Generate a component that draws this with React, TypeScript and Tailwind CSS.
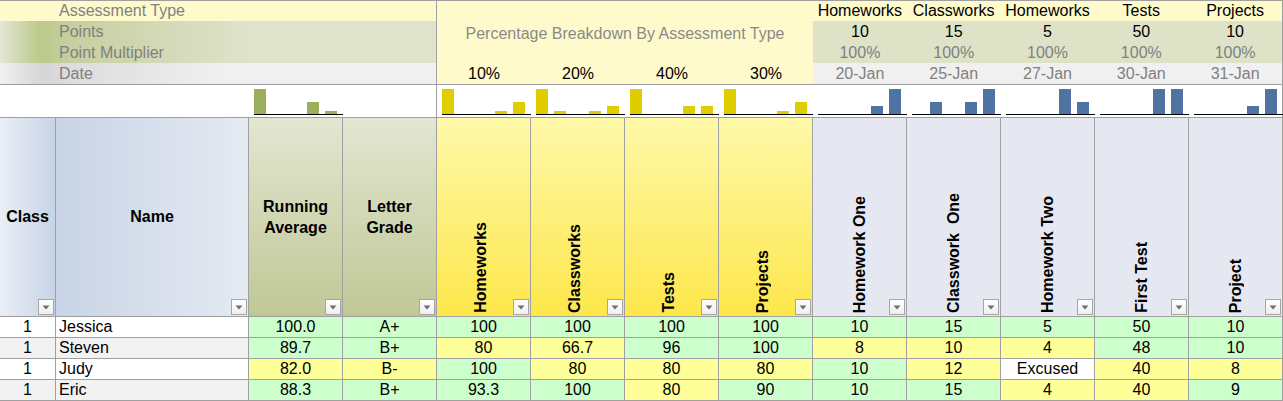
import React from 'react';

const FONT = { fontFamily: '"Liberation Sans", Arial, sans-serif' };

type Tone = 'g' | 'y' | 'w';

const assessments = [
  { type: 'Homeworks', points: '10', date: '20-Jan', title: 'Homework One' },
  { type: 'Classworks', points: '15', date: '25-Jan', title: 'Classwork  One' },
  { type: 'Homeworks', points: '5', date: '27-Jan', title: 'Homework Two' },
  { type: 'Tests', points: '50', date: '30-Jan', title: 'First Test' },
  { type: 'Projects', points: '10', date: '31-Jan', title: 'Project' },
];

const breakdown = [
  { title: 'Homeworks', pct: '10%', bars: [25, 0, 0, 3, 12] },
  { title: 'Classworks', pct: '20%', bars: [25, 3, 0, 3, 8] },
  { title: 'Tests', pct: '40%', bars: [25, 0, 0, 8, 8] },
  { title: 'Projects', pct: '30%', bars: [25, 0, 0, 3, 12] },
];

const scoreBars = [
  [0, 0, 0, 8, 25],
  [0, 12, 0, 12, 25],
  [0, 0, 0, 25, 12],
  [0, 0, 0, 25, 25],
  [0, 0, 0, 8, 25],
];

// [value, tone] per column after Name
const students: { name: string; cells: [string, Tone][] }[] = [
  {
    name: 'Jessica',
    cells: [['100.0', 'g'], ['A+', 'g'], ['100', 'g'], ['100', 'g'], ['100', 'g'], ['100', 'g'], ['10', 'g'], ['15', 'g'], ['5', 'g'], ['50', 'g'], ['10', 'g']],
  },
  {
    name: 'Steven',
    cells: [['89.7', 'g'], ['B+', 'g'], ['80', 'y'], ['66.7', 'y'], ['96', 'g'], ['100', 'g'], ['8', 'y'], ['10', 'y'], ['4', 'y'], ['48', 'g'], ['10', 'g']],
  },
  {
    name: 'Judy',
    cells: [['82.0', 'y'], ['B-', 'y'], ['100', 'g'], ['80', 'y'], ['80', 'y'], ['80', 'y'], ['10', 'g'], ['12', 'y'], ['Excused', 'w'], ['40', 'y'], ['8', 'y']],
  },
  {
    name: 'Eric',
    cells: [['88.3', 'g'], ['B+', 'g'], ['93.3', 'g'], ['100', 'g'], ['80', 'y'], ['90', 'g'], ['10', 'g'], ['15', 'g'], ['4', 'y'], ['40', 'y'], ['9', 'g']],
  },
];

const toneBg: Record<Tone, string> = {
  g: 'bg-[#ccffcc]',
  y: 'bg-[#ffff99]',
  w: 'bg-white',
};

function MiniChart({ bars, color }: { bars: number[]; color: string }) {
  return (
    <div className="ml-[5px] mt-[4px] grid h-[26px] w-[89px] grid-cols-5 items-end border-b border-black">
      {bars.map((h, i) => (
        <div key={i} className="flex h-full items-end">
          {h > 0 && <div className={`w-[12px] ${color}`} style={{ height: h }} />}
        </div>
      ))}
    </div>
  );
}

function FilterButton() {
  return (
    <div className="absolute bottom-[1px] right-[1px] flex h-[16px] w-[16px] items-center justify-center border border-[#a6a6a6] bg-[linear-gradient(to_bottom,#ffffff,#eeeeee)]">
      <svg width="8" height="5" viewBox="0 0 8 5">
        <path d="M0.5 0.5 L7.5 0.5 L4 4.5 Z" fill="#6e6e6e" />
      </svg>
    </div>
  );
}

function VerticalHeader({ label, bg, shift }: { label: string; bg: string; shift?: boolean }) {
  return (
    <div className={`relative flex h-full w-[94px] shrink-0 items-end justify-center border-r border-[#a0a0a0] pb-[3px] ${bg}`}>
      <span className={`rotate-180 whitespace-pre text-[16px] font-bold leading-[18px] text-black [writing-mode:vertical-rl] ${shift ? 'mr-[5px]' : ''}`}>
        {label}
      </span>
      <FilterButton />
    </div>
  );
}

export default function App() {
  return (
    <div className="w-[1283px] overflow-hidden bg-white text-black" style={FONT}>
      {/* Top info rows */}
      <div className="flex h-[85px] border-y border-[#a0a0a0] text-[16px]">
        <div className="flex w-[437px] shrink-0 flex-col border-r border-[#a0a0a0] text-[#808080]">
          <div className="flex h-[20px] items-center bg-[#fffacc] pl-[59px]">Assessment Type</div>
          <div className="flex h-[42px] flex-col bg-[linear-gradient(to_right,#e3e7d4_0px,#bdcb8e_38px,#bccb8d_48px,#c6cf9f_70px,#dfe3cc_250px,#dfe3cc_100%)] pl-[59px]">
            <div className="flex h-[21px] items-center">Points</div>
            <div className="flex h-[21px] items-center">Point Multiplier</div>
          </div>
          <div className="flex h-[21px] items-center bg-[linear-gradient(to_right,#f1f1f1_0px,#d8d8d8_38px,#d6d6d6_48px,#dddddd_70px,#f0f0f0_230px,#f0f0f0_100%)] pl-[59px]">
            Date
          </div>
        </div>
        <div className="flex w-[376px] shrink-0 flex-col bg-[#fffacc]">
          <div className="flex h-[62px] items-center justify-center pt-[4px] text-[#8a8a8a]">
            Percentage Breakdown By Assessment Type
          </div>
          <div className="flex h-[21px]">
            {breakdown.map((b) => (
              <div key={b.title} className="flex w-[94px] items-center justify-center">
                {b.pct}
              </div>
            ))}
          </div>
        </div>
        <div className="flex w-[470px] shrink-0 border-r border-[#a0a0a0]">
          {assessments.map((a, i) => (
            <div key={i} className="flex w-[94px] flex-col">
              <div className="flex h-[20px] items-center justify-center bg-[#fffacc]">{a.type}</div>
              <div className="flex h-[21px] items-center justify-center bg-[#dee3c8]">{a.points}</div>
              <div className="flex h-[21px] items-center justify-center bg-[#dee3c8] text-[#808080]">100%</div>
              <div className="flex h-[21px] items-center justify-center bg-[#f0f0f0] text-[#808080]">{a.date}</div>
            </div>
          ))}
        </div>
      </div>

      {/* Sparkline row */}
      <div className="flex h-[33px] border-b border-[#a0a0a0]">
        <div className="flex w-[437px] shrink-0 border-r border-[#a0a0a0]">
          <div className="w-[249px] shrink-0" />
          <div className="w-[188px] shrink-0">
            <MiniChart bars={[25, 0, 0, 12, 3]} color="bg-[#9bae5c]" />
          </div>
        </div>
        {breakdown.map((b) => (
          <div key={b.title} className="w-[94px] shrink-0">
            <MiniChart bars={b.bars} color="bg-[#e0cd00]" />
          </div>
        ))}
        {scoreBars.map((bars, i) => (
          <div key={i} className={`w-[94px] shrink-0 ${i === 4 ? 'border-r border-[#a0a0a0]' : ''}`}>
            <MiniChart bars={bars} color="bg-[#4f74a4]" />
          </div>
        ))}
      </div>

      {/* Column headers */}
      <div className="flex h-[199px] border-b border-[#a0a0a0] text-[16px] font-bold">
        <div className="relative flex w-[56px] shrink-0 items-center justify-center border-r border-[#a0a0a0] bg-[linear-gradient(to_right,#eaeff7,#c7d3e4)]">
          Class
          <FilterButton />
        </div>
        <div className="relative flex w-[193px] shrink-0 items-center justify-center border-r border-[#a0a0a0] bg-[linear-gradient(to_right,#c8d4e5,#e5eaf3)]">
          Name
          <FilterButton />
        </div>
        <div className="relative flex w-[94px] shrink-0 items-center justify-center border-r border-[#a0a0a0] bg-[linear-gradient(to_bottom,#e3e6d2,#bfc895)] text-center leading-[21px]">
          Running
          <br />
          Average
          <FilterButton />
        </div>
        <div className="relative flex w-[94px] shrink-0 items-center justify-center border-r border-[#a0a0a0] bg-[linear-gradient(to_bottom,#e3e6d2,#bfc895)] text-center leading-[21px]">
          Letter
          <br />
          Grade
          <FilterButton />
        </div>
        {breakdown.map((b) => (
          <VerticalHeader key={b.title} label={b.title} shift bg="bg-[linear-gradient(to_bottom,#fef8a9,#fde74b)]" />
        ))}
        {assessments.map((a, i) => (
          <VerticalHeader key={i} label={a.title} bg="bg-[#e5e8f1]" />
        ))}
      </div>

      {/* Student rows */}
      {students.map((s, r) => (
        <div key={s.name} className="flex h-[21px] border-b border-[#a0a0a0] text-[16px]">
          <div className={`flex w-[56px] shrink-0 items-center justify-center border-r border-[#a0a0a0] ${r % 2 ? 'bg-[#f2f2f2]' : 'bg-white'}`}>
            1
          </div>
          <div className={`flex w-[193px] shrink-0 items-center border-r border-[#a0a0a0] pl-[3px] ${r % 2 ? 'bg-[#f2f2f2]' : 'bg-white'}`}>
            {s.name}
          </div>
          {s.cells.map(([v, tone], c) => (
            <div key={c} className={`flex w-[94px] shrink-0 items-center justify-center border-r border-[#a0a0a0] ${toneBg[tone]}`}>
              {v}
            </div>
          ))}
        </div>
      ))}
    </div>
  );
}
